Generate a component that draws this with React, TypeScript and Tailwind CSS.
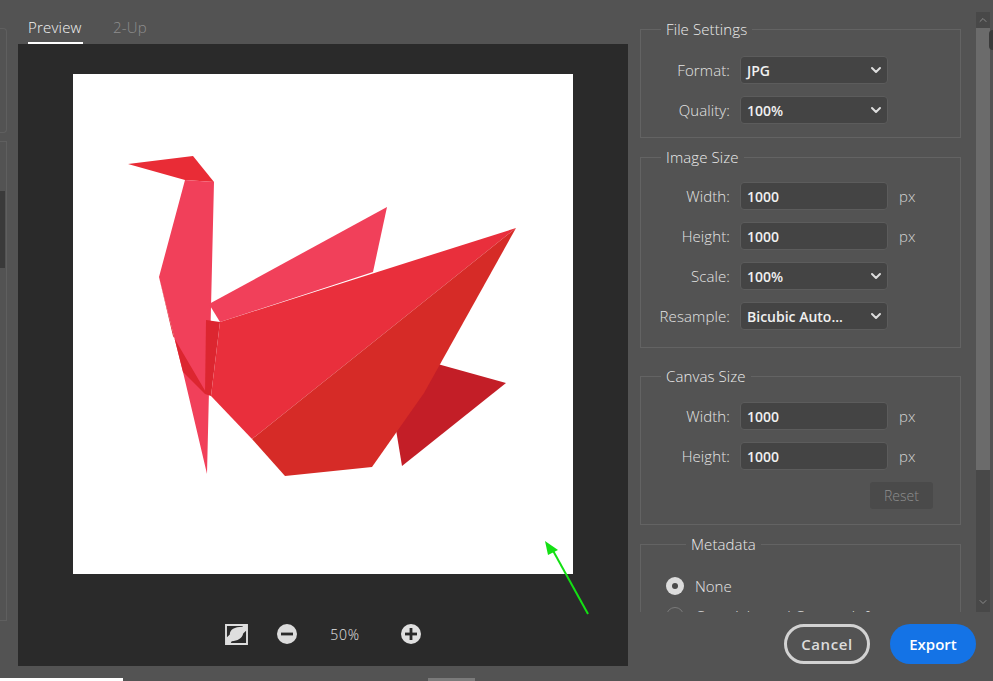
import React from "react";
import { ChevronDown, ChevronUp } from "lucide-react";

const font = "font-['Open_Sans','Noto_Sans',sans-serif]";

function Row({ label, value, select, px }: { label: string; value: string; select?: boolean; px?: boolean }) {
  return (
    <div className="flex h-7 items-center">
      <div className="w-[89px] shrink-0 text-right text-[15px] font-light tracking-[0.1px] text-[#e4e4e4]">{label}:</div>
      <div className="ml-[10px] flex h-7 w-[148px] shrink-0 items-center justify-between rounded-[4px] border border-[#5c5c5c] bg-[#444444] pl-[6px] pr-[3px]">
        <span className="text-[14px] font-semibold text-[#f0f0f0]">{value}</span>
        {select && <ChevronDown size={16} strokeWidth={3} className="text-[#dedede]" />}
      </div>
      {px && <span className="ml-[11px] text-[15px] font-light text-[#d4d4d4]">px</span>}
    </div>
  );
}

function Group({ title, className, children }: { title: string; className: string; children: React.ReactNode }) {
  return (
    <fieldset className={`border border-[#636363] ${className}`}>
      <legend className="ml-[20px] px-[5px] text-[15px] leading-[20px] font-light tracking-[0.1px] text-[#ececec]">{title}</legend>
      {children}
    </fieldset>
  );
}

function Swan() {
  return (
    <svg viewBox="0 0 500 500" className="h-[500px] w-[500px] bg-white">
      <polygon points="312,289 361,289 433,309 329,392" fill="#c31e27" />
      <polygon points="55,90 120,82 141,108 112,106" fill="#e92c36" />
      <polygon points="112,106 141,108 134,400 110,298 86,203" fill="#f1405a" />
      <polygon points="86,203 100,262 134,320 132,320 110,298" fill="#dc2630" />
      <polygon points="136,230 314,133 300,198 147,248" fill="#f1405a" />
      <polygon points="133,246 147,248 138,322 132,320" fill="#dc2630" />
      <polygon points="147,248 443,154 179,365 138,322" fill="#e92f3c" />
      <polygon points="443,154 351,319 299,393 212,402 179,365" fill="#d62b27" />
    </svg>
  );
}

export default function App() {
  return (
    <div className={`relative flex h-[681px] w-[993px] overflow-hidden bg-[#535353] ${font}`}>
      {/* left sliver of the window behind */}
      <div className="flex w-[18px] shrink-0 flex-col pt-[28px]">
        <div className="h-[105px] w-[7px] rounded-r-sm border border-l-0 border-[#5f5f5f]" />
        <div className="mt-2 flex h-[480px] w-[7px] flex-col border border-l-0 border-[#5f5f5f] pt-[49px]">
          <div className="h-[77px] w-[5px] bg-[#3a3a3a]" />
        </div>
      </div>

      {/* preview */}
      <div className="flex w-[610px] shrink-0 flex-col">
        <div className="flex h-[44px] items-end pl-[10px] text-[15px] font-light tracking-[0.2px]">
          <div className="h-[44px] w-[55px] border-b-2 border-white pt-[15px] leading-[24px] text-[#f4f4f4]">Preview</div>
          <div className="ml-[30px] h-[44px] pt-[15px] leading-[24px] text-[#8e8e8e]">2-Up</div>
        </div>
        <div className="flex h-[622px] flex-col items-center bg-[#2a2a2a] pt-[30px]">
          <div className="relative ml-[0px]">
            <Swan />
            <svg className="absolute left-[465px] top-[460px] h-[90px] w-[60px]" viewBox="0 0 60 90">
              <line x1="50" y1="80" x2="13" y2="13" stroke="#14e014" strokeWidth="2" />
              <polygon points="7,7 20,16 10,21" fill="#14e014" />
            </svg>
          </div>
          <div className="mt-[48px] flex h-6 items-center">
            <svg viewBox="0 0 24 22" className="h-[21px] w-[23px]">
              <path fillRule="evenodd" fill="#dedede" d="M0 0H24V22H0ZM2 2V14L5 11C5 6 10 3 18 3L19 2ZM6 20H22V7L19 10C18 15 13 18 7 18L6 20Z" />
              <path fill="#3a3a3a" d="M2 2H19L2 19Z" opacity="0" />
            </svg>
            <svg viewBox="0 0 20 20" className="ml-[29px] h-5 w-5">
              <circle cx="10" cy="10" r="10" fill="#dcdcdc" />
              <rect x="4" y="8.6" width="12" height="2.8" fill="#2a2a2a" />
            </svg>
            <span className="ml-[33px] w-[30px] text-center text-[14px] font-light tracking-[0.8px] text-[#e4e4e4]">50%</span>
            <svg viewBox="0 0 20 20" className="ml-[41px] h-5 w-5">
              <circle cx="10" cy="10" r="10" fill="#e0e0e0" />
              <rect x="4" y="8.6" width="12" height="2.8" fill="#2a2a2a" />
              <rect x="8.6" y="4" width="2.8" height="12" fill="#2a2a2a" />
            </svg>
          </div>
        </div>
      </div>

      {/* settings */}
      <div className="ml-[12px] flex w-[353px] shrink-0 flex-col">
        <div className="mt-[12px] flex h-[600px]">
          <div className="h-[600px] w-[321px] overflow-hidden pt-[7px]">
            <Group title="File Settings" className="flex h-[119px] flex-col gap-3 pt-[17px]">
              <Row label="Format" value="JPG" select />
              <Row label="Quality" value="100%" select />
            </Group>
            <Group title="Image Size" className="mt-[9px] flex h-[201px] flex-col gap-3 pt-[15px]">
              <Row label="Width" value="1000" px />
              <Row label="Height" value="1000" px />
              <Row label="Scale" value="100%" select />
              <Row label="Resample" value="Bicubic Auto..." select />
            </Group>
            <Group title="Canvas Size" className="mt-[18px] h-[159px] pt-[16px]">
              <div className="flex flex-col gap-3">
                <Row label="Width" value="1000" px />
                <Row label="Height" value="1000" px />
              </div>
              <div className="mt-[12px] flex justify-end pr-[27px]">
                <div className="flex h-[27px] w-[63px] items-center justify-center rounded-[3px] bg-[#4a4a4a] text-[14px] font-light text-[#8f8f8f]">Reset</div>
              </div>
            </Group>
            <Group title="Metadata" className="mt-[9px] h-[120px] pl-[25px] pt-[17px]">
              <div className="flex h-[30px] items-center gap-[11px]">
                <span className="flex h-[18px] w-[18px] items-center justify-center rounded-full bg-[#dcdcdc]">
                  <span className="h-[6px] w-[6px] rounded-full bg-[#4a4a4a]" />
                </span>
                <span className="text-[15px] font-light text-[#e4e4e4]">None</span>
              </div>
              <div className="flex h-[30px] items-center gap-[11px]">
                <span className="h-[18px] w-[18px] rounded-full border border-[#7a7a7a]" />
                <span className="text-[15px] font-light tracking-[0.1px] text-[#e4e4e4]">Copyright and Contact Info</span>
              </div>
            </Group>
          </div>
          <div className="ml-[15px] flex h-[600px] w-[14px] flex-col bg-[#484848]">
            <div className="flex h-4 items-center justify-center">
              <ChevronUp size={12} className="text-[#8a8a8a]" />
            </div>
            <div className="h-[442px] bg-[#6b6b6b]" />
            <div className="mt-auto flex h-5 items-center justify-center">
              <ChevronDown size={12} className="text-[#8a8a8a]" />
            </div>
          </div>
        </div>
        <div className="mt-[12px] flex h-10 justify-start pl-[144px]">
          <div className="flex h-10 w-[86px] items-center justify-center rounded-full border-[3px] border-[#d2d2d2] text-[15px] font-semibold tracking-[0.6px] text-[#dcdcdc]">Cancel</div>
          <div className="ml-[20px] flex h-10 w-[86px] items-center justify-center rounded-full bg-[#1473e6] text-[15px] font-semibold text-white">Export</div>
        </div>
      </div>

      {/* window behind, peeking out */}
      <div className="absolute bottom-0 left-0 h-[3px] w-[123px] bg-white" />
      <div className="absolute bottom-0 left-[428px] h-[3px] w-[47px] bg-[#7a7a7a]" />
      <div className="absolute right-0 top-[30px] h-[20px] w-[4px] rounded-l-sm bg-[#3a3a3a]" />
    </div>
  );
}
